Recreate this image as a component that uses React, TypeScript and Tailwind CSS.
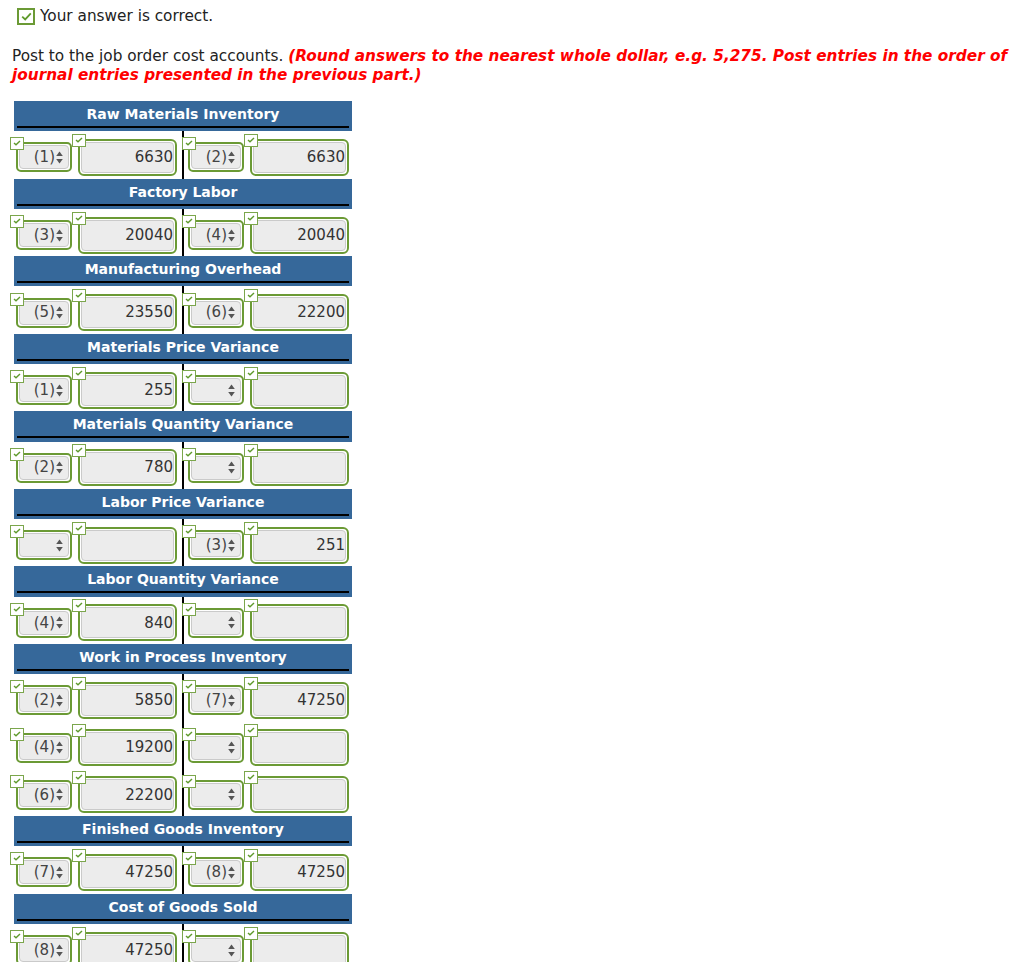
type Side = { n?: number; v?: number };
type Row = [Side, Side];

interface Account {
  title: string;
  rows: Row[];
}

const accounts: Account[] = [
  { title: 'Raw Materials Inventory', rows: [[{ n: 1, v: 6630 }, { n: 2, v: 6630 }]] },
  { title: 'Factory Labor', rows: [[{ n: 3, v: 20040 }, { n: 4, v: 20040 }]] },
  { title: 'Manufacturing Overhead', rows: [[{ n: 5, v: 23550 }, { n: 6, v: 22200 }]] },
  { title: 'Materials Price Variance', rows: [[{ n: 1, v: 255 }, {}]] },
  { title: 'Materials Quantity Variance', rows: [[{ n: 2, v: 780 }, {}]] },
  { title: 'Labor Price Variance', rows: [[{}, { n: 3, v: 251 }]] },
  { title: 'Labor Quantity Variance', rows: [[{ n: 4, v: 840 }, {}]] },
  {
    title: 'Work in Process Inventory',
    rows: [
      [{ n: 2, v: 5850 }, { n: 7, v: 47250 }],
      [{ n: 4, v: 19200 }, {}],
      [{ n: 6, v: 22200 }, {}],
    ],
  },
  { title: 'Finished Goods Inventory', rows: [[{ n: 7, v: 47250 }, { n: 8, v: 47250 }]] },
  { title: 'Cost of Goods Sold', rows: [[{ n: 8, v: 47250 }, {}]] },
];

function Badge() {
  return (
    <span className="absolute -left-[8px] -top-[7px] z-10 flex h-[13px] w-[14px] items-start justify-center border border-[#7ba64c] bg-white pt-[2px]">
      <svg width="8" height="6" viewBox="0 0 8 6">
        <path d="M1 3 L3 4.8 L7 1" fill="none" stroke="#5f9a2c" strokeWidth="1.4" />
      </svg>
    </span>
  );
}

function Arrows() {
  return (
    <svg width="7" height="13" viewBox="0 0 7 13" className="shrink-0">
      <path d="M3.5 0.5 L6.8 5 L0.2 5 Z" fill="#555" />
      <path d="M3.5 12.5 L6.8 8 L0.2 8 Z" fill="#555" />
    </svg>
  );
}

function Picker({ n }: { n?: number }) {
  return (
    <div className="relative h-[30px] w-[56px] shrink-0 rounded-[5px] border-2 border-[#6b9a35] bg-white p-px">
      <Badge />
      <div className="flex h-full items-center justify-end gap-px rounded-[4px] border border-[#cacaca] bg-[#ececec] pr-[5px] text-[15px] text-[#444]">
        {n !== undefined && <span>({n})</span>}
        <Arrows />
      </div>
    </div>
  );
}

function Amount({ v }: { v?: number }) {
  return (
    <div className="relative h-[37px] w-[99px] shrink-0 rounded-[6px] border-2 border-[#6b9a35] bg-white p-px">
      <Badge />
      <div className="flex h-full items-center justify-end rounded-[4px] border border-[#cacaca] bg-[#ececec] text-[15px] text-[#333]">
        {v}
      </div>
    </div>
  );
}

function Entry({ side }: { side: Side }) {
  return (
    <div className="flex items-center gap-[6px]">
      <Picker n={side.n} />
      <Amount v={side.v} />
    </div>
  );
}

export default function App() {
  return (
    <div
      className="min-h-[962px] w-[1024px] overflow-hidden bg-white text-[#222]"
      style={{ fontFamily: '"DejaVu Sans", Verdana, sans-serif' }}
    >
      <div className="flex items-center gap-[5px] pl-[17px] pt-[5px] text-[15.3px]">
        <span className="flex h-[17px] w-[18px] items-center justify-center border-2 border-[#6b9a35] bg-white">
          <svg width="11" height="9" viewBox="0 0 11 9">
            <path d="M1.2 4.6 L4.2 7.4 L9.8 1.4" fill="none" stroke="#5f9a2c" strokeWidth="1.8" />
          </svg>
        </span>
        <span>Your answer is correct.</span>
      </div>

      <p className="mt-[19px] pl-[12px] pr-[14px] text-[15.3px] leading-[19px]">
        Post to the job order cost accounts.{' '}
        <span className="font-bold italic text-[#ff0000]">
          (Round answers to the nearest whole dollar, e.g. 5,275. Post entries in the order of journal entries presented in the previous part.)
        </span>
      </p>

      <div className="ml-[14px] mt-[16px] w-[338px]">
        {accounts.map((acc) => (
          <div key={acc.title}>
            <div className="flex h-[30.4px] flex-col bg-[#36689a] px-[3px]">
              <div className="flex h-[25px] items-center justify-center pt-[2px] text-[14px] font-bold text-white">
                {acc.title}
              </div>
              <div className="h-[2px] bg-black" />
            </div>
            <div className="flex">
              <div className="flex w-[168px] flex-col">
                {acc.rows.map((r, i) => (
                  <div key={i} className="flex h-[47.2px] items-center pl-[2px] pt-[5px]">
                    <Entry side={r[0]} />
                  </div>
                ))}
              </div>
              <div className="flex w-[170px] flex-col border-l-2 border-black">
                {acc.rows.map((r, i) => (
                  <div key={i} className="flex h-[47.2px] items-center pl-[4px] pt-[5px]">
                    <Entry side={r[1]} />
                  </div>
                ))}
              </div>
            </div>
          </div>
        ))}
      </div>
    </div>
  );
}
